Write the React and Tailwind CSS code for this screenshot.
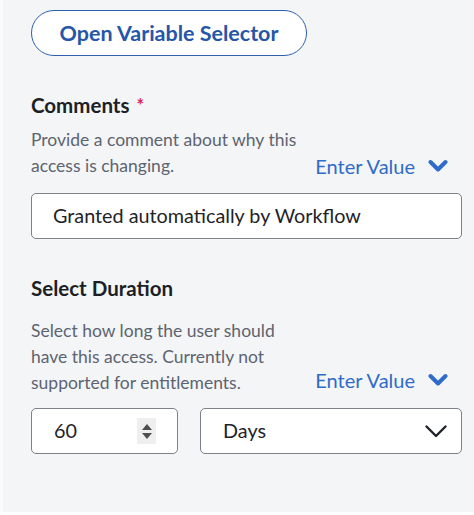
import React from "react";

function Chevron({ className }) {
  return (
    <svg viewBox="0 0 20 14" className={className} fill="none">
      <path d="M2.5 3 L10 10.5 L17.5 3" stroke="currentColor" strokeWidth="4" strokeLinecap="round" strokeLinejoin="round" />
    </svg>
  );
}

function EnterValue({ lifted }) {
  return (
    <div className={lifted
      ? "shrink-0 whitespace-nowrap flex items-center gap-[13px] text-[#2f6bc9] text-[20px] leading-[26px] pr-[14px] pb-[3px]"
      : "shrink-0 whitespace-nowrap flex items-center gap-[13px] text-[#2f6bc9] text-[20px] leading-[26px] pr-[14px]"}>
      <span>Enter Value</span>
      <Chevron className="w-[20px] h-[14px]" />
    </div>
  );
}

export default function App() {
  return (
    <div
      className="w-[474px] h-[515px] bg-[#f4f5f7] border-l-[3px] border-l-[#fafbfc] border-b-[3px] border-b-white flex flex-col pl-[28px] pr-[12px] pt-[10px] overflow-hidden"
      style={{ fontFamily: "Lato, 'Noto Sans', sans-serif" }}
    >
      <button className="w-[276px] h-[46px] rounded-full border-[1.5px] border-[#2d5fae] bg-white text-[#2656a8] text-[21.5px] font-bold flex items-center justify-center">
        Open Variable Selector
      </button>

      <div className="mt-[38px] flex items-center gap-[7px] text-[#1c1f26] text-[20.5px] font-bold leading-[22px]">
        <span>Comments</span>
        <span className="text-[#d42a5a] text-[18px]">*</span>
      </div>
      <div className="mt-[11px] flex items-end justify-between">
        <p className="shrink-0 text-[#5d6470] text-[17.5px] leading-[26px] w-[272px]">
          Provide a comment about why this access is changing.
        </p>
        <EnterValue />
      </div>
      <div className="mt-[14px] h-[46px] rounded-[5px] border border-[#7c818a] bg-white flex items-center px-[21px] text-[#1f2329] text-[19.8px]">
        Granted automatically by Workflow
      </div>

      <div className="mt-[38px] text-[#1c1f26] text-[20.5px] font-bold leading-[22px]">
        Select Duration
      </div>
      <div className="mt-[19px] flex items-end justify-between">
        <p className="shrink-0 text-[#5d6470] text-[17.5px] leading-[26px] w-[265px]">
          Select how long the user should have this access. Currently not supported for entitlements.
        </p>
        <EnterValue lifted />
      </div>
      <div className="mt-[12px] flex gap-[22px]">
        <div className="w-[147px] h-[46px] rounded-[5px] border border-[#7c818a] bg-white flex items-center justify-between pl-[22px] pr-[21px] text-[#1f2329] text-[19.8px]">
          <span>60</span>
          <div className="w-[19px] h-[26px] bg-[#efefef] flex flex-col items-center justify-center gap-[3px]">
            <svg viewBox="0 0 10 6" className="w-[10px] h-[6px]"><path d="M5 0 L10 6 L0 6 Z" fill="#505050" /></svg>
            <svg viewBox="0 0 10 6" className="w-[10px] h-[6px]"><path d="M0 0 L10 0 L5 6 Z" fill="#505050" /></svg>
          </div>
        </div>
        <div className="flex-1 h-[46px] rounded-[5px] border border-[#7c818a] bg-white flex items-center justify-between pl-[22px] pr-[14px] text-[#1f2329] text-[19.8px]">
          <span>Days</span>
          <svg viewBox="0 0 22 13" className="w-[22px] h-[13px]" fill="none">
            <path d="M1.5 1.5 L11 11 L20.5 1.5" stroke="#1f2329" strokeWidth="2.4" strokeLinecap="round" strokeLinejoin="round" />
          </svg>
        </div>
      </div>
    </div>
  );
}
